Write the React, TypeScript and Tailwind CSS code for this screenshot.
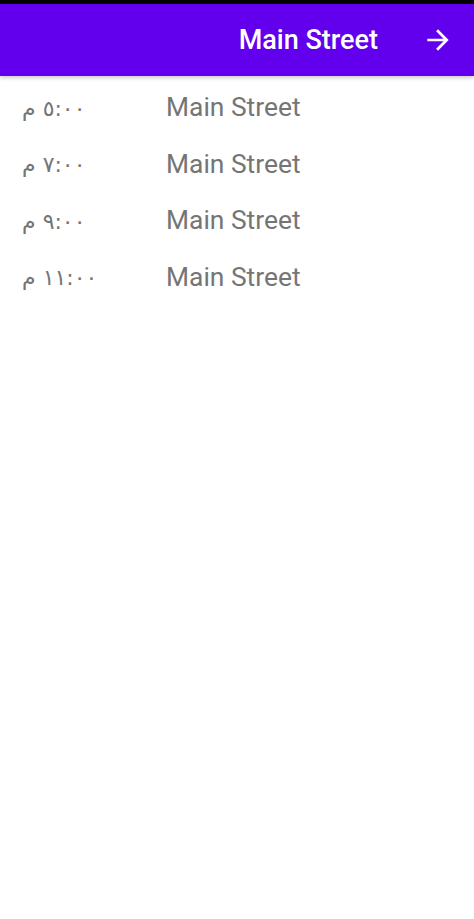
import React from "react";

const rows = ["٥:٠٠ م", "٧:٠٠ م", "٩:٠٠ م", "١١:٠٠ م"];

export default function App() {
  return (
    <div className="w-[474px] h-[919px] bg-white flex flex-col" style={{ fontFamily: "Roboto, 'DejaVu Sans', sans-serif" }}>
      <div className="h-[4px] bg-black" />
      <div className="h-[72px] bg-[#6200ee] flex items-center justify-end shadow-[0_2px_4px_rgba(0,0,0,0.2)] relative z-10">
        <span className="text-white text-[27px] font-medium mr-[44px] mt-[1px]">Main Street</span>
        <svg width="32" height="32" viewBox="0 0 24 24" className="mr-[20px]" fill="white">
          <path d="M12 4l-1.41 1.41L16.17 11H4v2h12.17l-5.58 5.59L12 20l8-8z" />
        </svg>
      </div>
      <div className="flex flex-col pt-[4px]">
        {rows.map((t, i) => (
          <div key={i} className="h-[56.5px] flex items-center">
            <span className="w-[166px] pl-[22px] text-[22px] text-[#757575]" style={{ fontFamily: "'DejaVu Sans', sans-serif" }}>{t}</span>
            <span className="text-[26.4px] text-[#757575]">Main Street</span>
          </div>
        ))}
      </div>
    </div>
  );
}
